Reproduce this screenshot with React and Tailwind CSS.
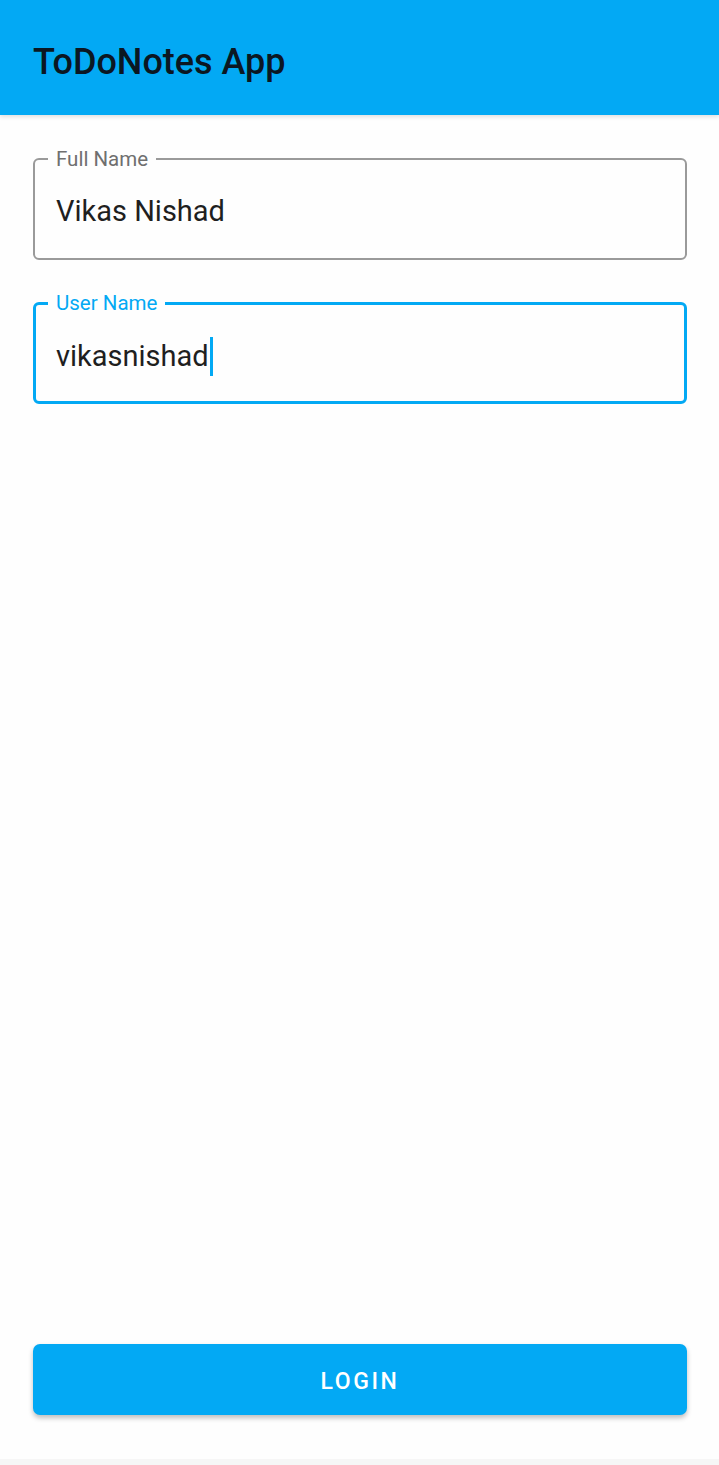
export default function App() {
  const font = { fontFamily: "Roboto, 'Noto Sans', sans-serif" };
  return (
    <div className="w-[719px] h-[1465px] bg-[#fefefe] flex flex-col" style={font}>
      <header className="h-[115px] bg-[#03a9f4] flex items-center px-[33px] shadow-[0_2px_4px_rgba(0,0,0,0.12)] shrink-0 relative z-10">
        <h1 className="text-[36px] font-medium text-[#0b1722] leading-none mt-[8px]">ToDoNotes App</h1>
      </header>
      <main className="flex-1 flex flex-col pl-[33px] pr-[32px]">
        <fieldset className="mt-[33px] border-2 border-[#9a9a9a] rounded-[6px] h-[112px] px-[13px] pb-[2px]">
          <legend className="text-[20.5px] leading-[22px] text-[#6f6f6f] px-[8px]">Full Name</legend>
          <div className="text-[29px] text-[#1f1f1f] leading-none mt-[27px] pl-[8px]">Vikas Nishad</div>
        </fieldset>
        <fieldset className="mt-[32px] border-[3px] border-[#03a9f4] rounded-[6px] h-[112px] px-[12px]">
          <legend className="text-[20.5px] leading-[22px] text-[#03a9f4] px-[8px]">User Name</legend>
          <div className="text-[29px] text-[#1f1f1f] leading-none mt-[23px] pl-[8px] flex items-center">
            <span>vikasnishad</span>
            <span className="inline-block w-[3px] h-[39px] bg-[#03a9f4] ml-[1px]"></span>
          </div>
        </fieldset>
        <div className="flex-1"></div>
        <button className="h-[71px] w-full rounded-[7px] bg-[#03a9f4] text-white text-[23px] font-medium tracking-[2.6px] pt-[5px] shadow-[0_3px_5px_rgba(0,0,0,0.25)] mb-[44px]">
          LOGIN
        </button>
      </main>
      <div className="h-[6px] bg-[#f6f6f6] shrink-0"></div>
    </div>
  );
}
